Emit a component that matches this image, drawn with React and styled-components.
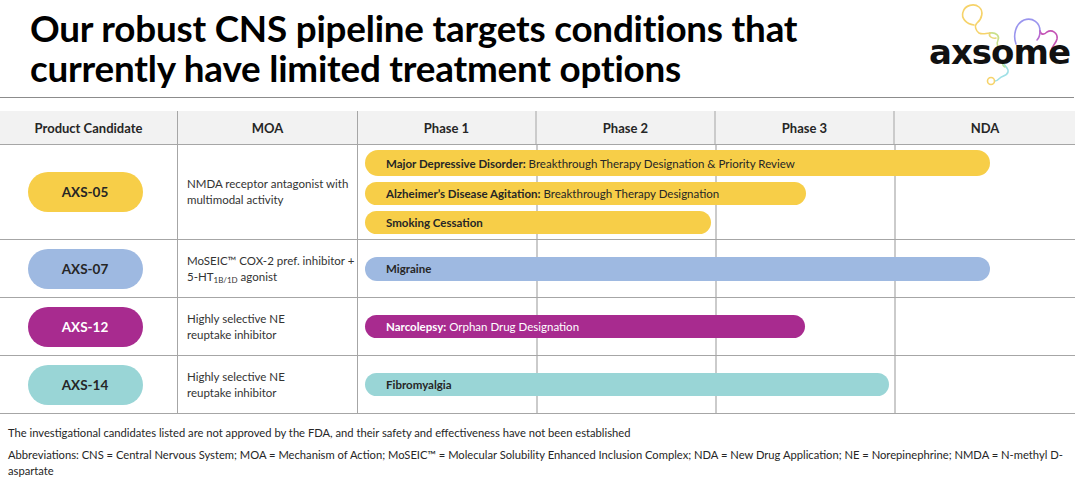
import React from "react";
import styled, { createGlobalStyle } from "styled-components";

const Global = createGlobalStyle`
  html, body { margin: 0; padding: 0; background: #fff; }
  body { font-family: Lato, "Liberation Sans", sans-serif; color: #262626; }
  * { box-sizing: border-box; }
`;

const Page = styled.div`
  width: 1080px;
  height: 480px;
  overflow: hidden;
  position: relative;
  background: #fff;
`;

const Header = styled.header`
  display: flex;
  justify-content: space-between;
  align-items: flex-start;
  height: 98px;
  border-bottom: 1px solid #8c8c8c;
  width: 1074px;
`;

const Title = styled.h1`
  margin: 0;
  padding: 8px 0 0 30px;
  font-family: Lato, "Liberation Sans", sans-serif;
  font-weight: 700;
  font-size: 36.8px;
  line-height: 40px;
  letter-spacing: -0.2px;
  color: #000;
  white-space: nowrap;
`;

const Logo = styled.div`
  position: relative;
  width: 150px;
  height: 96px;
`;

const LogoText = styled.span`
  position: absolute;
  left: 5px;
  top: 33px;
  font-family: "DejaVu Sans", sans-serif;
  font-weight: 700;
  font-size: 34px;
  line-height: 38px;
  letter-spacing: -1px;
  color: #111;
`;

const LogoArt = styled.svg`
  position: absolute;
  left: 0;
  top: 0;
`;

const Table = styled.div`
  margin-top: 13px;
  width: 1075px;
`;

const Row = styled.div`
  display: grid;
  grid-template-columns: 178px 180px 717px;
  height: ${(p) => p.$h}px;
  border-bottom: 1px solid #a6a6a6;
  background: ${(p) => (p.$head ? "#f2f2f2" : "#fff")};
`;

const Cell = styled.div`
  display: flex;
  align-items: center;
  justify-content: ${(p) => (p.$center ? "center" : "flex-start")};
  border-right: 1px solid #a6a6a6;
  padding: ${(p) => p.$pad || "0"};
`;

const HeadText = styled.span`
  font-weight: 700;
  font-size: 13px;
  color: #262626;
`;

const PhaseHead = styled.div`
  display: grid;
  grid-template-columns: 179px 179px 179px 180px;
`;

const PhaseHeadCell = styled.div`
  display: flex;
  align-items: center;
  justify-content: center;
  border-right: 2px solid #cbcbcb;
  &:last-child { border-right: none; }
`;

const Candidate = styled.div`
  width: 115px;
  height: 40px;
  margin-left: -7px;
  border-radius: 20px;
  background: ${(p) => p.$color};
  color: ${(p) => p.$fg};
  display: flex;
  align-items: center;
  justify-content: center;
  font-weight: 700;
  font-size: 13.5px;
`;

const Moa = styled.div`
  font-size: 11.5px;
  line-height: 16px;
  color: #333;
  sub { font-size: 8px; vertical-align: -2px; line-height: 0; }
`;

const PhaseArea = styled.div`
  display: flex;
  flex-direction: column;
  justify-content: center;
  gap: 6px;
  padding-left: 7px;
  background-image: linear-gradient(
      to right,
      transparent 178px, #cbcbcb 178px, #cbcbcb 180px, transparent 180px,
      transparent 357px, #cbcbcb 357px, #cbcbcb 359px, transparent 359px,
      transparent 536px, #cbcbcb 536px, #cbcbcb 538px, transparent 538px
    );
`;

const Bar = styled.div`
  height: ${(p) => p.$h}px;
  border-radius: ${(p) => p.$h / 2}px;
  background: ${(p) => p.$color};
  color: ${(p) => p.$fg};
  display: flex;
  align-items: center;
  padding-left: 21px;
  font-size: 11.5px;
  white-space: nowrap;
`;

const BarLabel = styled.span`
  b { font-weight: 700; }
`;

const Notes = styled.div`
  padding: 11px 0 0 8px;
  font-size: 11.2px;
  color: #262626;
`;

const Note = styled.p`
  margin: 0 0 6px 0;
  line-height: 16px;
  width: 1060px;
`;

const YEL = "#f7ce48";
const BLU = "#9eb9e1";
const PUR = "#a82b8f";
const TEA = "#99d5d6";

const rows = [
  {
    id: "AXS-05",
    color: YEL,
    fg: "#262626",
    h: 95,
    moa: <>NMDA receptor antagonist with<br />multimodal activity</>,
    bars: [
      { w: 625, h: 26, b: "Major Depressive Disorder:", t: " Breakthrough Therapy Designation & Priority Review" },
      { w: 441, h: 23, b: "Alzheimer’s Disease Agitation:", t: " Breakthrough Therapy Designation" },
      { w: 346, h: 23, b: "Smoking Cessation", t: "" },
    ],
  },
  {
    id: "AXS-07",
    color: BLU,
    fg: "#262626",
    h: 58,
    moa: <>MoSEIC™ COX-2 pref. inhibitor +<br />5-HT<sub>1B/1D</sub> agonist</>,
    bars: [{ w: 625, h: 24, b: "Migraine", t: "" }],
  },
  {
    id: "AXS-12",
    color: PUR,
    fg: "#fff",
    h: 58,
    moa: <>Highly selective NE<br />reuptake inhibitor</>,
    bars: [{ w: 440, h: 23, b: "Narcolepsy:", t: " Orphan Drug Designation" }],
  },
  {
    id: "AXS-14",
    color: TEA,
    fg: "#262626",
    h: 58,
    moa: <>Highly selective NE<br />reuptake inhibitor</>,
    bars: [{ w: 524, h: 23, b: "Fibromyalgia", t: "" }],
  },
];

function AxsomeLogo() {
  return (
    <Logo>
      <LogoArt width="150" height="96" viewBox="0 0 150 96" fill="none" strokeLinecap="round" strokeWidth="1.6">
        <path d="M50 25 C42 24 37 18 39 12 C41 5 50 3 55 7 C60 11 58 19 53 23 C50 26 52 31 55 33 C59 35 62 33 66 33" stroke="#f6d36a" />
        <path d="M66 33 C72 32 76 36 74 40 C72 44 74 46 74 48" stroke="#c9e08a" />
        <path d="M66 33 C64 36 68 39 72 38" stroke="#e8d87a" />
        <path d="M92 44 C89 36 91 24 100 20 C109 17 116 23 116 31" stroke="#9a95ee" />
        <path d="M116 31 C117 35 120 35 123 32 C128 29 134 33 133 39 C132 44 127 46 127 52" stroke="#c452b4" />
        <path d="M113 40 C115 38 116 35 116 31" stroke="#b86ad0" />
        <path d="M79 62 C80 66 85 68 84 72 C83 76 78 76 76 78 C74 80 72 81 71 81" stroke="#9fe0e6" />
        <path d="M79 62 C78 64 79 66 81 67" stroke="#b9e4a0" />
        <circle cx="67" cy="81" r="3.5" stroke="#f6d36a" />
      </LogoArt>
      <LogoText>axsome</LogoText>
    </Logo>
  );
}

export default function App() {
  return (
    <Page>
      <Global />
      <Header>
        <Title>
          Our robust CNS pipeline targets conditions that
          <br />
          currently have limited treatment options
        </Title>
        <AxsomeLogo />
      </Header>
      <Table>
        <Row $h={34} $head>
          <Cell $center><HeadText>Product Candidate</HeadText></Cell>
          <Cell $center><HeadText>MOA</HeadText></Cell>
          <PhaseHead>
            {["Phase 1", "Phase 2", "Phase 3", "NDA"].map((p) => (
              <PhaseHeadCell key={p}><HeadText>{p}</HeadText></PhaseHeadCell>
            ))}
          </PhaseHead>
        </Row>
        {rows.map((r) => (
          <Row key={r.id} $h={r.h}>
            <Cell $center>
              <Candidate $color={r.color} $fg={r.fg}>{r.id}</Candidate>
            </Cell>
            <Cell $pad="0 0 0 9px">
              <Moa>{r.moa}</Moa>
            </Cell>
            <PhaseArea>
              {r.bars.map((b, i) => (
                <Bar key={i} $h={b.h} $color={r.color} $fg={r.fg} style={{ width: b.w }}>
                  <BarLabel><b>{b.b}</b>{b.t}</BarLabel>
                </Bar>
              ))}
            </PhaseArea>
          </Row>
        ))}
      </Table>
      <Notes>
        <Note>The investigational candidates listed are not approved by the FDA, and their safety and effectiveness have not been established</Note>
        <Note>
          Abbreviations: CNS = Central Nervous System; MOA = Mechanism of Action; MoSEIC™ = Molecular Solubility Enhanced Inclusion Complex; NDA = New Drug Application; NE = Norepinephrine; NMDA = N-methyl D-
          <br />aspartate
        </Note>
      </Notes>
    </Page>
  );
}
